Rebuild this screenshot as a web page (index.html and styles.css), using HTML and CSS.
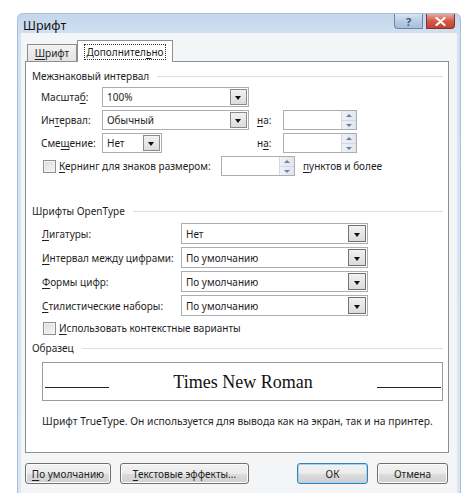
FILE: index.html
```html
<!DOCTYPE html>
<html lang="ru">
<head>
    <meta charset="UTF-8">
    <title>Шрифт</title>
    <link rel="stylesheet" href="styles.css">
</head>
<body>
    <div class="window">
        <div class="titlebar">
            <span class="title">Шрифт</span>
            <div class="caption-btns">
                <span class="cap-btn help">?</span>
                <span class="cap-btn close">
                    <svg width="11" height="9" viewBox="0 0 11 9">
                        <path d="M1.5 1 L9.5 8 M9.5 1 L1.5 8" stroke="#fff" stroke-width="2.2" stroke-linecap="round"/>
                    </svg>
                </span>
            </div>
        </div>

        <div class="client">
            <div class="tabs">
                <div class="tab"><u>Ш</u>рифт</div>
                <div class="tab active"><span class="focus">Дополнител<u>ь</u>но</span></div>
            </div>

            <div class="panel">
                <!-- Межзнаковый интервал -->
                <div class="group-head"><span>Межзнаковый интервал</span></div>
                <div class="spacing-grid">
                    <span class="lbl">Масшта<u>б</u>:</span>
                    <div class="combo wide"><span class="value">100%</span><span class="drop"></span></div>

                    <span class="lbl">Ин<u>т</u>ервал:</span>
                    <div class="combo wide"><span class="value">Обычный</span><span class="drop"></span></div>
                    <span class="lbl by"><u>н</u>а:</span>
                    <div class="spin"><span class="value"></span><span class="arrows"><i class="up"></i><i class="down"></i></span></div>

                    <span class="lbl">Сме<u>щ</u>ение:</span>
                    <div class="combo short"><span class="value">Нет</span><span class="drop"></span></div>
                    <span class="lbl by">н<u>а</u>:</span>
                    <div class="spin"><span class="value"></span><span class="arrows"><i class="up"></i><i class="down"></i></span></div>

                    <div class="kern-row">
                        <span class="check"></span>
                        <span class="lbl kern-lbl"><u>К</u>ернинг для знаков размером:</span>
                        <div class="spin"><span class="value"></span><span class="arrows"><i class="up"></i><i class="down"></i></span></div>
                        <span class="lbl"><u>п</u>унктов и более</span>
                    </div>
                </div>

                <!-- Шрифты OpenType -->
                <div class="group-head opentype"><span>Шрифты OpenType</span></div>
                <div class="ot-grid">
                    <span class="lbl"><u>Л</u>игатуры:</span>
                    <div class="combo boxed"><span class="value">Нет</span><span class="drop"></span></div>

                    <span class="lbl"><u>И</u>нтервал между цифрами:</span>
                    <div class="combo boxed"><span class="value">По умолчанию</span><span class="drop"></span></div>

                    <span class="lbl"><u>Ф</u>ормы цифр:</span>
                    <div class="combo boxed"><span class="value">По умолчанию</span><span class="drop"></span></div>

                    <span class="lbl"><u>С</u>тилистические наборы:</span>
                    <div class="combo boxed"><span class="value">По умолчанию</span><span class="drop"></span></div>
                </div>
                <div class="check-row">
                    <span class="check"></span>
                    <span class="lbl"><u>И</u>спользовать контекстные варианты</span>
                </div>

                <!-- Образец -->
                <div class="group-head sample-head"><span>Образец</span></div>
                <div class="sample">
                    <span class="rule"></span>
                    <span class="sample-text">Times New Roman</span>
                    <span class="rule"></span>
                </div>
                <p class="note">Шрифт TrueType. Он используется для вывода как на экран, так и на принтер.</p>
            </div>

            <div class="actions">
                <button class="btn default-btn"><u>П</u>о умолчанию</button>
                <button class="btn effects-btn"><u>Т</u>екстовые эффекты...</button>
                <span class="spacer"></span>
                <button class="btn ok-btn">ОК</button>
                <button class="btn cancel-btn">Отмена</button>
            </div>
        </div>
    </div>
</body>
</html>
```

FILE: styles.css
```css
* { box-sizing: border-box; }

body {
    margin: 0;
    background: #fff;
    font-family: "Noto Sans", "DejaVu Sans", sans-serif;
    font-size: 10px;
    color: #1e1e1e;
}

u { text-decoration-thickness: 1px; text-underline-offset: 2px; }

/* window frame */
.window {
    margin: 13px 0 0 17px;
    width: 444px;
    height: 480px;
    padding: 0 3px 0 3px;
    background: linear-gradient(#c3d6ec, #d3e2f2 22px, #dae6f3);
    border: 1px solid #a9bfd8;
    border-bottom: none;
    border-radius: 6px 6px 0 0;
    display: flex;
    flex-direction: column;
}

.titlebar {
    height: 19px;
    display: flex;
    align-items: center;
    justify-content: space-between;
    padding-left: 2px;
}

.title {
    font-size: 12.5px;
    color: #111;
    padding-top: 3px;
}

.caption-btns {
    display: flex;
    gap: 3px;
    align-self: flex-start;
    margin-right: 2px;
}

.cap-btn {
    width: 29px;
    height: 15px;
    border: 1px solid #6d84a3;
    border-top: none;
    display: flex;
    align-items: center;
    justify-content: center;
}

.help {
    border-radius: 0 0 0 4px;
    background: linear-gradient(#d8e4f1, #b9cde5 50%, #a6bfdc);
    color: #3d5577;
    font-weight: bold;
    font-size: 11px;
}

.close {
    border-color: #7e3431;
    border-radius: 0 0 4px 0;
    background: linear-gradient(#e9a99c, #d3594a 50%, #c4412f);
}

/* dialog body */
.client {
    flex: 1;
    background: #f4f5f7;
    padding: 7px 8px 0 4px;
}

.tabs {
    display: flex;
    align-items: flex-end;
    padding-left: 2px;
    height: 21px;
}

.tab {
    height: 17px;
    width: 50px;
    border: 1px solid #8e8f8f;
    border-bottom: none;
    background: linear-gradient(#f2f2f2, #e3e3e3);
    display: flex;
    align-items: center;
    justify-content: center;
}

.tab.active {
    position: relative;
    z-index: 1;
    height: 22px;
    width: 96px;
    margin-bottom: -1px;
    background: #fff;
}

.focus {
    outline: 1px dotted #333;
    padding: 0 2px;
    line-height: 14px;
}

.panel {
    height: 392px;
    background: #fff;
    border: 1px solid #8e8f8f;
    padding: 7px 5px 0 6px;
}

.group-head {
    display: flex;
    align-items: center;
    height: 14px;
    gap: 8px;
}

.group-head::after {
    content: '';
    flex: 1;
    border-top: 1px solid #dcdfe3;
}

.lbl {
    white-space: nowrap;
}

/* spacing rows */
.spacing-grid {
    display: grid;
    grid-template-columns: 61px 147px 8px 26px 74px;
    grid-auto-rows: 20px;
    row-gap: 3px;
    align-items: center;
    margin: 4px 0 0 9px;
}

.spacing-grid > .lbl { grid-column: 1; }
.spacing-grid > .combo { grid-column: 2; }
.spacing-grid > .lbl.by { grid-column: 4; }
.spacing-grid > .spin { grid-column: 5; }

.combo {
    height: 20px;
    border: 1px solid #abadb3;
    background: #fff;
    display: flex;
    align-items: stretch;
}

.combo .value {
    flex: 1;
    padding-left: 4px;
    display: flex;
    align-items: center;
}

.combo .drop {
    width: 17px;
    margin: 1px;
    border: 1px solid #8b8b8b;
    background: linear-gradient(#f1f1f1, #dcdcdc);
    position: relative;
}

.combo .drop::after {
    content: '';
    position: absolute;
    left: 4px;
    top: 6px;
    border-left: 3.5px solid transparent;
    border-right: 3.5px solid transparent;
    border-top: 4px solid #111;
}

.combo.short { width: 60px; }

.spin {
    height: 20px;
    width: 74px;
    border: 1px solid #abadb3;
    background: #fff;
    display: flex;
}

.spin .value { flex: 1; }

.spin .arrows {
    width: 15px;
    display: flex;
    flex-direction: column;
    background: linear-gradient(90deg, #eef1f5, #e1e6ec);
    border-left: 1px solid #d5d9df;
}

.spin i {
    flex: 1;
    position: relative;
}

.spin i + i { border-top: 1px solid #d5d9df; }

.spin i::after {
    content: '';
    position: absolute;
    left: 4px;
    top: 3px;
    border-left: 3px solid transparent;
    border-right: 3px solid transparent;
}

.spin .up::after { border-bottom: 3px solid #6d82a3; }
.spin .down::after { border-top: 3px solid #6d82a3; }

.kern-row {
    grid-column: 1 / -1;
    display: flex;
    align-items: center;
    padding-left: 2px;
}

.check {
    width: 13px;
    height: 13px;
    border: 1px solid #8f8f8f;
    background: linear-gradient(135deg, #dcdcdc, #f6f6f6);
    box-shadow: inset 0 0 0 1px #f4f4f4;
    margin-right: 3px;
    flex: none;
}

.kern-lbl { width: 162px; flex: none; }

.kern-row .spin { width: 74px; margin-right: 8px; flex: none; }

/* OpenType rows */
.group-head.opentype { margin-top: 28px; }

.ot-grid {
    display: grid;
    grid-template-columns: 139px 187px;
    grid-auto-rows: 21px;
    row-gap: 3px;
    align-items: center;
    margin: 5px 0 0 10px;
}

.combo.boxed { height: 21px; }

.combo.boxed .drop {
    width: 18px;
    margin: 1px;
    border-color: #707070;
}

.combo.boxed .drop::after { top: 7px; left: 5px; }

.check-row {
    display: flex;
    align-items: center;
    height: 14px;
    margin: 5px 0 0 11px;
}

/* sample */
.group-head.sample-head { margin-top: 6px; }

.sample {
    height: 39px;
    margin: 7px 0 0 10px;
    border: 1px solid #9c9c9c;
    display: flex;
    align-items: flex-end;
    justify-content: space-between;
    padding: 0 1px 12px 2px;
}

.rule {
    width: 64px;
    border-bottom: 1px solid #222;
}

.sample-text {
    font-family: "Liberation Serif", serif;
    font-size: 18px;
    line-height: 18px;
    margin-bottom: -3px;
    color: #111;
}

.note {
    margin: 13px 0 0 10px;
    height: 14px;
    line-height: 14px;
    font-size: 10.3px;
}

/* bottom buttons */
.actions {
    display: flex;
    align-items: center;
    margin-top: 10px;
    gap: 9px;
    padding-right: 1px;
}

.btn {
    height: 21px;
    border: 1px solid #707070;
    border-radius: 3px;
    background: linear-gradient(#f2f2f2 0%, #ebebeb 50%, #dddddd 51%, #cfcfcf 100%);
    box-shadow: inset 0 0 0 1px #fcfcfc;
    font-family: inherit;
    font-size: 10px;
    color: #1e1e1e;
    padding: 0;
}

.default-btn { width: 86px; }
.effects-btn { width: 129px; }
.spacer { flex: 1; }
.ok-btn {
    width: 71px;
    border-color: #3c7fb1;
    box-shadow: inset 0 0 0 1px #9fd6f4;
}
.cancel-btn { width: 71px; }
```
